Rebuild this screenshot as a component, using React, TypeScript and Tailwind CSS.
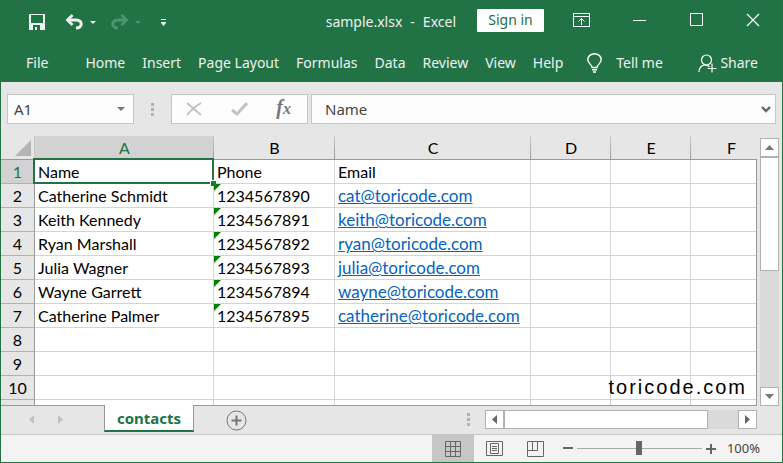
import { useState } from "react";
import type { ReactNode } from "react";

interface Contact {
  name: string;
  phone: string;
  email: string;
}

const contacts: Contact[] = [
  { name: "Catherine Schmidt", phone: "1234567890", email: "cat@toricode.com" },
  { name: "Keith Kennedy", phone: "1234567891", email: "keith@toricode.com" },
  { name: "Ryan Marshall", phone: "1234567892", email: "ryan@toricode.com" },
  { name: "Julia Wagner", phone: "1234567893", email: "julia@toricode.com" },
  { name: "Wayne Garrett", phone: "1234567894", email: "wayne@toricode.com" },
  { name: "Catherine Palmer", phone: "1234567895", email: "catherine@toricode.com" },
];

const ribbonTabs = ["Home", "Insert", "Page Layout", "Formulas", "Data", "Review", "View", "Help"];
const columns = ["A", "B", "C", "D", "E", "F"];
const emptyRows = [8, 9, 10];

function TitleBar() {
  return (
    <div className="flex h-11 items-center justify-between pl-7">
      <div className="flex items-center">
        <button aria-label="Save">
          <svg width="16" height="16" viewBox="0 0 16 16" fill="#f0f0f0">
            <path
              fillRule="evenodd"
              d="M0 0h16v16H0zM2 1v8h12V1zM4 11v5h2v-3h2v3h3v-5z"
            />
          </svg>
        </button>
        <button aria-label="Undo" className="ml-5">
          <svg width="19" height="16" viewBox="0 0 19 16" fill="none" stroke="#f0f0f0" strokeWidth="3">
            <path d="M3 6h8c7 0 7 8 0 8" />
            <path d="M7.500 1L2.500 6l5 5" strokeWidth="2.800" />
          </svg>
        </button>
        <Caret className="ml-1.5 text-[#f0f0f0]" />
        <button aria-label="Redo" className="ml-3.5">
          <svg width="19" height="16" viewBox="0 0 19 16" fill="none" stroke="#4f9470" strokeWidth="3">
            <path d="M16 6H8C1 6 1 14 8 14" />
            <path d="M11.500 1l5 5-5 5" strokeWidth="2.800" />
          </svg>
        </button>
        <Caret className="ml-1.5 text-[#4f9470]" />
        <button aria-label="Customize Quick Access Toolbar" className="ml-5">
          <svg width="5" height="7" viewBox="0 0 5 7" fill="#f0f0f0">
            <path d="M0 0h5v1H0zM0 3h5v1L2.500 7 0 4z" />
          </svg>
        </button>
      </div>
      <h1 className="ml-auto flex gap-2 text-sm whitespace-pre">
        <span>sample.xlsx</span>
        <span>-</span>
        <span>Excel</span>
      </h1>
      <button className="mb-1 ml-[21px] h-[23px] w-[67px] rounded-[1px] bg-white text-sm leading-[22px] text-[#217346]">
        Sign in
      </button>
      <div className="mb-1 ml-[29px] flex items-center pr-[22px]">
        <button aria-label="Ribbon display options">
          <svg width="17" height="14" viewBox="0 0 17 14" fill="none" stroke="#fff">
            <path d="M.5.5h16v13H.5zM.5 3.500h16M8.500 12V5.500M5.500 8.500l3-3 3 3" />
          </svg>
        </button>
        <button aria-label="Minimize" className="ml-[43px]">
          <svg width="13" height="14" viewBox="0 0 13 14" stroke="#fff">
            <path d="M0 7.500h13" />
          </svg>
        </button>
        <button aria-label="Maximize" className="ml-11">
          <svg width="13" height="14" viewBox="0 0 13 14" fill="none" stroke="#fff">
            <path d="M.5.5h12v12H.5z" />
          </svg>
        </button>
        <button aria-label="Close" className="ml-[43px]">
          <svg width="14" height="14" viewBox="0 0 14 14" stroke="#fff" strokeWidth="1.200">
            <path d="M1 1l12 12M13 1L1 13" />
          </svg>
        </button>
      </div>
    </div>
  );
}

function Caret({ className }: { className: string }) {
  return (
    <svg className={className} width="6" height="3" viewBox="0 0 6 3" fill="currentColor">
      <path d="M0 0h6L3 3z" />
    </svg>
  );
}

function Ribbon() {
  return (
    <nav className="flex h-[38px] items-center pr-6 pl-[25px] text-sm">
      <button>File</button>
      <div className="ml-[37px] flex gap-[17px]">
        {ribbonTabs.map((tab) => (
          <button key={tab} className="whitespace-nowrap">
            {tab}
          </button>
        ))}
      </div>
      <button className="ml-6 flex items-center gap-3.5 whitespace-nowrap">
        <svg width="15" height="20" viewBox="0 0 15 20" fill="none" stroke="#fff" strokeWidth="1.400">
          <path d="M5 14.500c0-3-4.200-4-4.200-8a6.700 5.800 0 0 1 13.400 0c0 4-4.200 5-4.200 8zM5 16.800h5M6 19h3" />
        </svg>
        Tell me
      </button>
      <button className="ml-auto flex items-center gap-[3px]">
        <svg width="19" height="19" viewBox="0 0 19 19" fill="none" stroke="#fff" strokeWidth="1.200">
          <circle cx="8.500" cy="6" r="5" />
          <path d="M1 18c0-4 2.500-7 6-7 2 0 3.500.8 4.500 2M14 9.500v9M9.500 14.500h9" />
        </svg>
        Share
      </button>
    </nav>
  );
}

function Grip() {
  return (
    <div className="flex flex-col gap-0.5">
      <span className="size-[3px] bg-[#b1b1b1]" />
      <span className="size-[3px] bg-[#b1b1b1]" />
      <span className="size-[3px] bg-[#b1b1b1]" />
    </div>
  );
}

function FormulaBar() {
  return (
    <div className="flex items-center pt-3 pr-1.5 pb-3 pl-1.5 text-[15px] text-[#444]">
      <div className="flex h-[30px] w-[127px] items-center border border-[#c6c6c6] bg-[#fdfdfd] pr-2 pl-1.5">
        <input aria-label="Name box" defaultValue="A1" className="w-full min-w-0 outline-none" />
        <button aria-label="Open name list">
          <svg width="8" height="4" viewBox="0 0 8 4" fill="#777">
            <path d="M0 0h8L4 4z" />
          </svg>
        </button>
      </div>
      <div className="mx-[17px]">
        <Grip />
      </div>
      <div className="flex h-[30px] w-[137px] shrink-0 items-center justify-between border border-[#c6c6c6] bg-[#fdfdfd] pr-4 pl-3.5">
        <button aria-label="Cancel">
          <svg width="16" height="14" viewBox="0 0 16 14" fill="none" stroke="#c3c3c3" strokeWidth="2">
            <path d="M1 1c5 4 9 8 14 12M15 1C10 4 5 8 1 13" />
          </svg>
        </button>
        <button aria-label="Enter">
          <svg width="17" height="14" viewBox="0 0 17 14" fill="none" stroke="#c3c3c3" strokeWidth="3">
            <path d="M1 8l5 4L16 1" />
          </svg>
        </button>
        <button
          aria-label="Insert function"
          className="font-['Liberation_Serif',serif] text-xl leading-5 font-bold text-[#777] italic"
        >
          f<span className="text-base">x</span>
        </button>
      </div>
      <div className="ml-[3px] flex h-[30px] min-w-0 flex-1 items-center border border-[#c6c6c6] bg-[#fdfdfd] pr-1 pl-[13px]">
        <input aria-label="Formula bar" defaultValue="Name" className="min-w-0 flex-1 outline-none" />
        <button aria-label="Expand formula bar">
          <svg width="10" height="7" viewBox="0 0 10 7" fill="none" stroke="#666" strokeWidth="2.400">
            <path d="M1 1l4 4 4-4" />
          </svg>
        </button>
      </div>
    </div>
  );
}

interface CellProps {
  children?: ReactNode;
}

function Cell({ children }: CellProps) {
  return (
    <td className="relative border-r border-b border-[#d4d4d4] bg-white p-0 pl-[3px] whitespace-nowrap">
      {children}
    </td>
  );
}

function RowNumber({ value, active = false }: { value?: number; active?: boolean }) {
  return (
    <th
      scope="row"
      className={
        active
          ? "border-r border-b border-[#b1b1b1] bg-[#d2d2d2] p-0 font-normal text-[#217346]"
          : "border-r border-b border-r-[#999] border-b-[#b1b1b1] p-0 font-normal"
      }
    >
      {value}
    </th>
  );
}

function Sheet() {
  return (
    <div className="relative min-w-0 flex-1 overflow-hidden border-b border-[#999]">
      <table className="w-full min-w-[771px] table-fixed border-separate border-spacing-0 font-[Lato,sans-serif] text-base leading-[23px] text-black">
        <colgroup>
          <col className="w-[34px]" />
          <col className="w-[179px]" />
          <col className="w-[121px]" />
          <col className="w-[196px]" />
          <col className="w-20" />
          <col className="w-20" />
          <col />
        </colgroup>
        <thead>
          <tr className="h-6">
            <td className="border-r border-b border-r-[#c6c6c6] border-b-[#999] p-0">
              <svg className="ml-auto mr-[3px]" width="16" height="16" viewBox="0 0 16 16" fill="#b4b4b4">
                <path d="M16 0v16H0z" />
              </svg>
            </td>
            {columns.map((column) => (
              <th
                key={column}
                scope="col"
                className={`relative border-b border-[#999] p-0 font-normal after:absolute after:inset-y-0 after:right-0 after:w-px after:bg-linear-to-b after:from-[#c9c9c9] after:to-[#999] ${
                  column === "A" ? "bg-[#d2d2d2] text-[#217346]" : ""
                }`}
              >
                {column}
              </th>
            ))}
          </tr>
        </thead>
        <tbody>
          <tr className="h-6">
            <RowNumber value={1} active />
            <Cell>
              Name
              <span className="absolute -top-0.5 -right-px -bottom-px -left-0.5 z-10 border-2 border-[#217346]" />
              <span className="absolute -right-[3px] -bottom-[3px] z-20 size-1.5 border-t border-l border-white bg-[#217346]" />
            </Cell>
            <Cell>Phone</Cell>
            <Cell>Email</Cell>
            <Cell />
            <Cell />
            <Cell />
          </tr>
          {contacts.map((contact, index) => (
            <tr key={contact.phone} className="h-6">
              <RowNumber value={index + 2} />
              <Cell>{contact.name}</Cell>
              <Cell>
                {/* number stored as text */}
                <span className="absolute top-0 left-0 border-t-[7px] border-r-[7px] border-t-[#008000] border-r-transparent" />
                {contact.phone}
              </Cell>
              <Cell>
                <a href={`mailto:${contact.email}`} className="text-[17px] text-[#0563c1] underline">
                  {contact.email}
                </a>
              </Cell>
              <Cell />
              <Cell />
              <Cell />
            </tr>
          ))}
          {emptyRows.map((row) => (
            <tr key={row} className="h-6">
              <RowNumber value={row} />
              {columns.map((column) => (
                <Cell key={column} />
              ))}
            </tr>
          ))}
          <tr className="h-6">
            <RowNumber />
            {columns.map((column) => (
              <Cell key={column} />
            ))}
          </tr>
        </tbody>
      </table>
      <span className="absolute top-6 right-0 bottom-0 w-px bg-[#999]" />
      <p className="absolute right-2.5 bottom-1.5 font-['Liberation_Sans',sans-serif] text-xl leading-6 tracking-widest text-black">
        toricode.com
      </p>
    </div>
  );
}

function VerticalScrollbar() {
  return (
    <div className="mx-[3px] mt-0.5 flex w-[19px] flex-col bg-[#dadada]">
      <button aria-label="Scroll up" className="flex h-[19px] items-center justify-center border border-[#b1b1b1] bg-white">
        <svg width="9" height="5" viewBox="0 0 9 5" fill="#777">
          <path d="M0 5h9L4.500 0z" />
        </svg>
      </button>
      <div className="h-[114px] border border-[#b1b1b1] bg-white" />
      <button
        aria-label="Scroll down"
        className="mt-auto flex h-[19px] items-center justify-center border border-[#b1b1b1] bg-white"
      >
        <svg width="9" height="5" viewBox="0 0 9 5" fill="#777">
          <path d="M0 0h9L4.500 5z" />
        </svg>
      </button>
    </div>
  );
}

function SheetTabs() {
  return (
    <div className="flex h-7 items-start pr-[25px] pl-7">
      <button aria-label="Previous sheet" className="mt-[9px]">
        <svg width="5" height="9" viewBox="0 0 5 9" fill="#c0c0c0">
          <path d="M5 0v9L0 4.500z" />
        </svg>
      </button>
      <button aria-label="Next sheet" className="mt-[9px] ml-6">
        <svg width="5" height="9" viewBox="0 0 5 9" fill="#c0c0c0">
          <path d="M0 0v9l5-4.500z" />
        </svg>
      </button>
      <button className="z-10 -mt-px ml-[41px] h-[27px] w-[90px] border-x border-b-2 border-x-[#999] border-b-[#217346] bg-white text-[15px] leading-6 font-bold text-[#217346]">
        contacts
      </button>
      <button aria-label="New sheet" className="mt-1 ml-8">
        <svg width="21" height="21" viewBox="0 0 21 21" fill="none" stroke="#777">
          <circle cx="10.500" cy="10.500" r="9.500" />
          <path d="M10.500 5.500v10M5.500 10.500h10" strokeWidth="2" />
        </svg>
      </button>
      <div className="mt-[7px] ml-auto">
        <Grip />
      </div>
      <div className="mt-1 ml-[15px] flex h-[19px] w-[272px] bg-[#dadada]">
        <button aria-label="Scroll left" className="flex w-[19px] items-center justify-center border border-[#b1b1b1] bg-white">
          <svg width="5" height="9" viewBox="0 0 5 9" fill="#666">
            <path d="M5 0v9L0 4.500z" />
          </svg>
        </button>
        <div className="w-[204px] border border-[#b1b1b1] bg-white" />
        <button
          aria-label="Scroll right"
          className="ml-auto flex w-[19px] items-center justify-center border border-[#b1b1b1] bg-white"
        >
          <svg width="5" height="9" viewBox="0 0 5 9" fill="#666">
            <path d="M0 0v9l5-4.500z" />
          </svg>
        </button>
      </div>
    </div>
  );
}

function StatusBar() {
  const [zoom, setZoom] = useState(100);

  return (
    <footer className="flex h-7 items-stretch justify-end border-t border-[#c6c6c6] bg-[#f3f3f3] pr-[22px] text-[#444]">
      <button aria-label="Normal view" className="flex w-[42px] items-center justify-center bg-[#c6c6c6]">
        <svg width="16" height="16" viewBox="0 0 16 16" fill="none" stroke="#666">
          <path d="M.5.5h15v15H.5zM5.500 0v16M10.500 0v16M0 5.500h16M0 10.500h16" />
        </svg>
      </button>
      <button aria-label="Page layout view" className="flex w-[41px] items-center justify-center">
        <svg width="17" height="15" viewBox="0 0 17 15" fill="none" stroke="#666">
          <path d="M.5.5h16v14H.5zM4.500 2.500h8v10h-8zM6 5.500h5M6 7.500h5M6 9.500h5" />
        </svg>
      </button>
      <button aria-label="Page break preview" className="flex w-[42px] items-center justify-center">
        <svg width="17" height="16" viewBox="0 0 17 16" fill="none" stroke="#666">
          <path d="M.5.5h16v15H.5zM5.500.5v9M.5 9.500h10v-9" />
        </svg>
      </button>
      <button aria-label="Zoom out" className="ml-1.5" onClick={() => setZoom(Math.max(0, zoom - 10))}>
        <svg width="10" height="10" viewBox="0 0 10 10" stroke="#666" strokeWidth="2">
          <path d="M0 4h10" />
        </svg>
      </button>
      <input
        type="range"
        aria-label="Zoom"
        min={0}
        max={200}
        value={zoom}
        onChange={(e) => setZoom(Number(e.target.value))}
        className="mx-1 w-[125px] appearance-none bg-transparent [&::-webkit-slider-runnable-track]:h-px [&::-webkit-slider-runnable-track]:bg-[#aaa] [&::-webkit-slider-thumb]:-mt-[7px] [&::-webkit-slider-thumb]:h-3.5 [&::-webkit-slider-thumb]:w-1.5 [&::-webkit-slider-thumb]:appearance-none [&::-webkit-slider-thumb]:bg-[#666]"
      />
      <button aria-label="Zoom in" onClick={() => setZoom(Math.min(200, zoom + 10))}>
        <svg width="10" height="10" viewBox="0 0 10 10" stroke="#666" strokeWidth="2">
          <path d="M0 5h10M5 0v10" />
        </svg>
      </button>
      <span className="ml-[11px] text-[13px] leading-[27px]">{zoom}%</span>
    </footer>
  );
}

export default function App() {
  return (
    <div className="flex h-screen flex-col overflow-hidden border-x border-b border-[#217346] bg-[#e6e6e6] font-['Noto_Sans',sans-serif]">
      <header className="bg-[#217346] text-[#f0f0f0]">
        <TitleBar />
        <Ribbon />
      </header>
      <FormulaBar />
      <main className="flex min-h-0 flex-1">
        <Sheet />
        <VerticalScrollbar />
      </main>
      <SheetTabs />
      <StatusBar />
    </div>
  );
}
